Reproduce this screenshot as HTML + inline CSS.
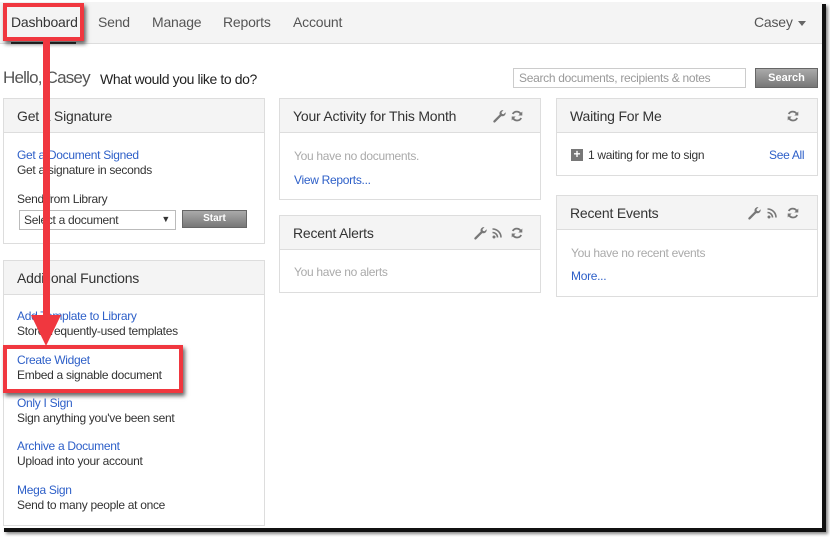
<!DOCTYPE html>
<html><head><meta charset="utf-8"><style>
*{margin:0;padding:0;box-sizing:border-box}
body{width:830px;height:537px;background:#fff;font-family:"Liberation Sans",sans-serif;position:relative;overflow:hidden;color:#333}
.a{position:absolute}
.shot{left:0;top:0;width:822px;height:528px;background:#fff;box-shadow:4px 4px 0 #111,6px 6px 3px #888;}
.nav{left:0;top:2px;width:822px;height:42px;background:#f4f4f4;border-bottom:1px solid #ddd}
.nav span{position:absolute;top:12px;font-size:14px;color:#555;letter-spacing:-0.2px}
.panel{background:#fff;border:1px solid #ddd}
.ph{position:absolute;left:0;top:0;right:0;height:34px;background:#f4f4f4;border-bottom:1px solid #ddd;font-size:14px;color:#333;padding:9px 0 0 13px;letter-spacing:-0.2px}
.t{position:absolute;font-size:12px;white-space:nowrap;letter-spacing:-0.3px}
.l{color:#2d5fc8}
.g{color:#aaa}
.ic{position:absolute;top:10px}
</style></head><body>
<svg width="0" height="0" style="position:absolute"><defs>
<g id="wr"><path d="M11.5 1.2a3.3 3.3 0 0 0-3.8 4.3L1.6 11.6a1.1 1.1 0 0 0 1.6 1.6l6.1-6.1a3.3 3.3 0 0 0 4.3-3.8l-2 2-1.7-.4-.4-1.7z" fill="#777"/></g>
<g id="rs"><circle cx="3" cy="11" r="1.5" fill="#777"/><path d="M1.5 6.5a5 5 0 0 1 5 5M1.5 3a8.5 8.5 0 0 1 8.5 8.5" stroke="#777" stroke-width="1.6" fill="none"/></g>
<g id="rf"><path d="M11 5.5A4.6 4.6 0 0 0 2.7 5M2.8 8.5A4.6 4.6 0 0 0 11.2 9" stroke="#777" stroke-width="1.8" fill="none"/><path d="M12.3 2.5v4h-4zM1.7 11.5v-4h4z" fill="#777"/></g>
</defs></svg>
<div class="a shot"></div>
<div class="a nav">
<span style="left:11px;color:#333">Dashboard</span>
<span style="left:98px">Send</span>
<span style="left:152px">Manage</span>
<span style="left:223px">Reports</span>
<span style="left:293px">Account</span>
<span style="left:754px">Casey</span>
<span style="left:798px;top:19px;width:0;height:0;border-left:4px solid transparent;border-right:4px solid transparent;border-top:5px solid #666"></span>
</div>
<div class="a" style="left:11px;top:42px;width:65px;height:2px;background:#333"></div>
<div class="a" style="left:3px;top:68px;font-size:17px;color:#555;letter-spacing:-0.8px">Hello, Casey</div>
<div class="a" style="left:100px;top:71px;font-size:14px;color:#222;letter-spacing:-0.4px">What would you like to do?</div>
<div class="a" style="left:513px;top:68px;width:233px;height:20px;border:1px solid #ccc;font-size:12px;color:#999;padding:2px 5px;letter-spacing:-0.3px">Search documents, recipients &amp; notes</div>
<div class="a" style="left:755px;top:68px;width:63px;height:20px;background:linear-gradient(#aaa,#777);border:1px solid #666;font-size:11px;font-weight:bold;color:#fff;text-align:center;padding-top:3px">Search</div>

<div class="a panel" style="left:3px;top:98px;width:262px;height:146px"><div class="ph">Get a Signature</div>
<div class="t l" style="left:13px;top:49px">Get a Document Signed</div>
<div class="t" style="left:13px;top:64px">Get a signature in seconds</div>
<div class="t" style="left:13px;top:93px">Send from Library</div>
<div class="a" style="left:15px;top:111px;width:157px;height:20px;border:1px solid #bbb;font-size:12px;padding:2px 4px;letter-spacing:-0.3px">Select a document<span style="position:absolute;right:5px;top:3px;font-size:9px">▼</span></div>
<div class="a" style="left:178px;top:111px;width:65px;height:18px;background:linear-gradient(#aaa,#777);border:1px solid #666;font-size:10px;font-weight:bold;color:#fff;text-align:center;padding-top:2px">Start</div>
</div>

<div class="a panel" style="left:3px;top:260px;width:262px;height:266px"><div class="ph">Additional Functions</div>
<div class="t l" style="left:13px;top:48px">Add Template to Library</div><div class="t" style="left:13px;top:63px">Store frequently-used templates</div>
<div class="t l" style="left:13px;top:92px">Create Widget</div><div class="t" style="left:13px;top:107px">Embed a signable document</div>
<div class="t l" style="left:13px;top:135px">Only I Sign</div><div class="t" style="left:13px;top:150px">Sign anything you've been sent</div>
<div class="t l" style="left:13px;top:178px">Archive a Document</div><div class="t" style="left:13px;top:193px">Upload into your account</div>
<div class="t l" style="left:13px;top:222px">Mega Sign</div><div class="t" style="left:13px;top:237px">Send to many people at once</div>
</div>

<div class="a panel" style="left:279px;top:98px;width:262px;height:102px"><div class="ph">Your Activity for This Month</div>
<svg class="ic" style="left:212px" width="14" height="14"><use href="#wr"/></svg><svg class="ic" style="left:230px" width="14" height="14"><use href="#rf"/></svg>
<div class="t g" style="left:14px;top:50px">You have no documents.</div>
<div class="t l" style="left:14px;top:74px">View Reports...</div></div>

<div class="a panel" style="left:279px;top:215px;width:262px;height:78px"><div class="ph">Recent Alerts</div>
<svg class="ic" style="left:193px" width="14" height="14"><use href="#wr"/></svg><svg class="ic" style="left:211px" width="14" height="14"><use href="#rs"/></svg><svg class="ic" style="left:230px" width="14" height="14"><use href="#rf"/></svg>
<div class="t g" style="left:14px;top:49px">You have no alerts</div></div>

<div class="a panel" style="left:556px;top:98px;width:262px;height:78px"><div class="ph">Waiting For Me</div>
<svg class="ic" style="left:229px" width="14" height="14"><use href="#rf"/></svg>
<div class="a" style="left:14px;top:50px;width:12px;height:12px;background:#777;color:#fff;font-size:12px;line-height:11px;text-align:center;font-weight:bold">+</div>
<div class="t" style="left:31px;top:49px">1 waiting for me to sign</div>
<div class="t l" style="left:212px;top:49px">See All</div></div>

<div class="a panel" style="left:556px;top:195px;width:262px;height:102px"><div class="ph">Recent Events</div>
<svg class="ic" style="left:190px" width="14" height="14"><use href="#wr"/></svg><svg class="ic" style="left:209px" width="14" height="14"><use href="#rs"/></svg><svg class="ic" style="left:229px" width="14" height="14"><use href="#rf"/></svg>
<div class="t g" style="left:14px;top:50px">You have no recent events</div>
<div class="t l" style="left:14px;top:73px">More...</div></div>

<div class="a" style="left:3px;top:3px;width:81px;height:38px;border:4px solid #f0373f;box-shadow:2px 3px 4px rgba(0,0,0,.6)"></div>
<div class="a" style="left:3px;top:345px;width:180px;height:48px;border:4px solid #f0373f;box-shadow:2px 3px 4px rgba(0,0,0,.6)"></div>
<div class="a" style="left:43px;top:41px;width:7px;height:276px;background:#f0373f"></div>
<div class="a" style="left:31px;top:315px;width:0;height:0;border-left:15px solid transparent;border-right:15px solid transparent;border-top:31px solid #f0373f"></div>
</body></html>
